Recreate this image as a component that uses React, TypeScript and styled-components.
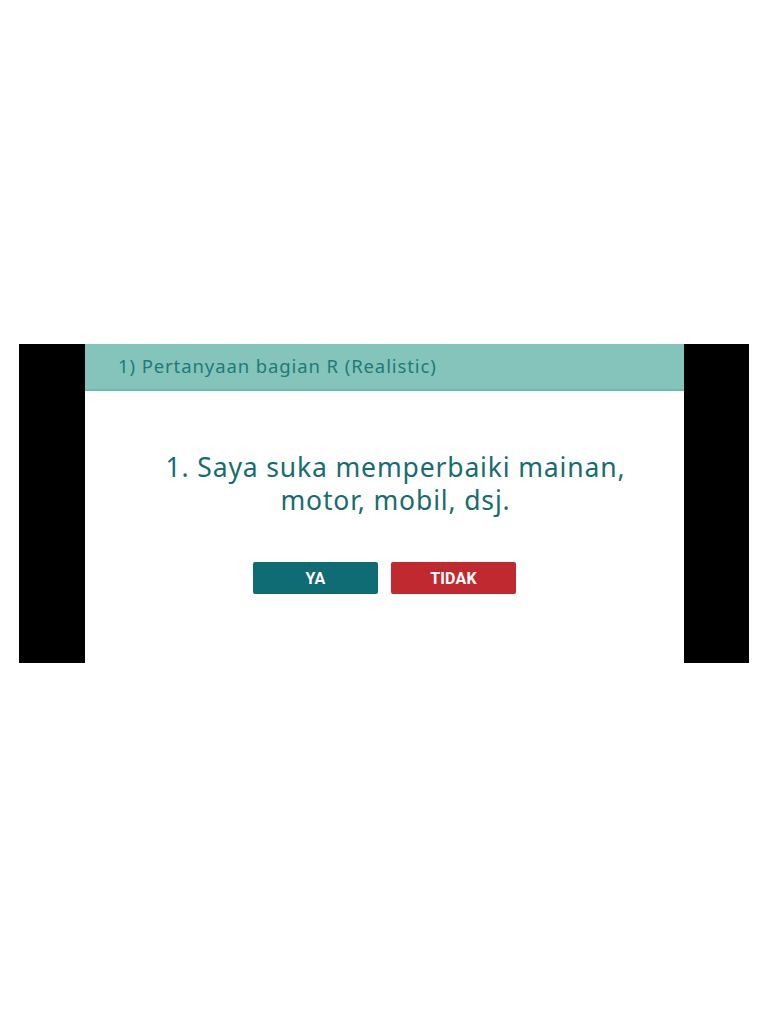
import React from "react";
import styled, { createGlobalStyle } from "styled-components";

const GlobalStyle = createGlobalStyle`
  html, body {
    margin: 0;
    padding: 0;
    background: #ffffff;
  }
  * {
    box-sizing: border-box;
  }
`;

const Page = styled.div`
  width: 768px;
  height: 1024px;
  padding-top: 344px;
  display: flex;
  justify-content: flex-start;
  padding-left: 19px;
`;

const Frame = styled.div`
  width: 730px;
  height: 319px;
  background: #000000;
  padding: 0 65px 0 66px;
  display: flex;
`;

const Panel = styled.div`
  flex: 1;
  background: #ffffff;
  display: flex;
  flex-direction: column;
`;

const Header = styled.div`
  height: 47px;
  background: #85c4bb;
  border-bottom: 2px solid #6fbcaf;
  display: flex;
  align-items: center;
  padding-left: 33px;
  padding-bottom: 2px;
  font-family: "Noto Sans", sans-serif;
  font-size: 18.5px;
  letter-spacing: 0.9px;
  color: #1f7a79;
`;

const Body = styled.div`
  flex: 1;
  display: flex;
  flex-direction: column;
  align-items: center;
  padding-top: 60px;
`;

const Question = styled.div`
  font-family: "Noto Sans", sans-serif;
  font-size: 26.5px;
  line-height: 33px;
  letter-spacing: 0.85px;
  color: #176c70;
  text-align: center;
  width: 540px;
  margin-left: 22px;
`;

const Actions = styled.div`
  display: flex;
  gap: 13px;
  margin-top: 45px;
`;

const Choice = styled.button<{ $tone: string }>`
  width: 125px;
  height: 32px;
  border: none;
  border-radius: 2px;
  background: ${(p) => p.$tone};
  color: #ffffff;
  font-family: "Roboto", "Liberation Sans", sans-serif;
  font-weight: 700;
  font-size: 16px;
  letter-spacing: 0.2px;
  cursor: pointer;
  padding: 0;
`;

export default function App() {
  return (
    <>
      <GlobalStyle />
      <Page>
        <Frame>
          <Panel>
            <Header>1) Pertanyaan bagian R (Realistic)</Header>
            <Body>
              <Question>
                1. Saya suka memperbaiki mainan,
                <br />
                motor, mobil, dsj.
              </Question>
              <Actions>
                <Choice $tone="#0f6b74">YA</Choice>
                <Choice $tone="#c0292f">TIDAK</Choice>
              </Actions>
            </Body>
          </Panel>
        </Frame>
      </Page>
    </>
  );
}
